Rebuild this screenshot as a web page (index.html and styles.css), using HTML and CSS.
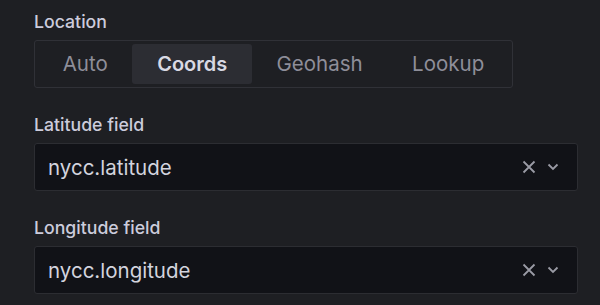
FILE: index.html
```html
<!DOCTYPE html>
<html>
<head>
<meta charset="utf-8">
<link rel="stylesheet" href="styles.css">
</head>
<body>
<div class="panel">
  <div class="field">
    <div class="label">Location</div>
    <div class="radio">
      <div class="opt">Auto</div>
      <div class="opt active">Coords</div>
      <div class="opt">Geohash</div>
      <div class="opt">Lookup</div>
    </div>
  </div>
  <div class="field">
    <div class="label">Latitude field</div>
    <div class="select">
      <span class="value">nycc.latitude</span>
      <span class="icons">
        <svg class="x" width="14" height="14" viewBox="0 0 14 14"><path d="M1.5 1.5 L12.5 12.5 M12.5 1.5 L1.5 12.5" stroke="#9a9ba5" stroke-width="1.8" fill="none"/></svg>
        <svg class="chev" width="12" height="8" viewBox="0 0 12 8"><path d="M1.5 1.5 L6 6 L10.5 1.5" stroke="#9a9ba5" stroke-width="1.8" fill="none"/></svg>
      </span>
    </div>
  </div>
  <div class="field">
    <div class="label">Longitude field</div>
    <div class="select">
      <span class="value">nycc.longitude</span>
      <span class="icons">
        <svg class="x" width="14" height="14" viewBox="0 0 14 14"><path d="M1.5 1.5 L12.5 12.5 M12.5 1.5 L1.5 12.5" stroke="#9a9ba5" stroke-width="1.8" fill="none"/></svg>
        <svg class="chev" width="12" height="8" viewBox="0 0 12 8"><path d="M1.5 1.5 L6 6 L10.5 1.5" stroke="#9a9ba5" stroke-width="1.8" fill="none"/></svg>
      </span>
    </div>
  </div>
</div>
</body>
</html>
```

FILE: styles.css
```css
html, body {
  margin: 0;
  padding: 0;
  background: #1e1f23;
  height: 100%;
}
body {
  font-family: Inter, "Noto Sans", sans-serif;
}
.panel {
  padding: 10px 22px 0 34px;
  display: flex;
  flex-direction: column;
  gap: 25px;
}
.label {
  color: #ccccdc;
  font-size: 17.7px;
  font-weight: 500;
  line-height: 24px;
  margin-bottom: 6px;
}
.field {
  display: flex;
  flex-direction: column;
}
.radio {
  display: flex;
  align-self: flex-start;
  border: 1px solid #303137;
  border-radius: 3px;
  padding: 3px;
}
.opt {
  height: 40px;
  line-height: 40px;
  padding: 0 24.7px;
  font-size: 20.5px;
  color: #8e8e99;
  border-radius: 3px;
}
.opt.active {
  background: #2c2d33;
  color: #d8d9e3;
  font-weight: 600;
  font-size: 20px;
}
.select {
  height: 46px;
  border: 1px solid #2c2d32;
  border-radius: 3px;
  background: #111217;
  display: flex;
  align-items: center;
  padding: 0 18px 0 13px;
}
.value {
  flex: 1;
  color: #d3d4de;
  font-size: 20.5px;
}
.icons {
  display: flex;
  align-items: center;
  gap: 11px;
}
```
